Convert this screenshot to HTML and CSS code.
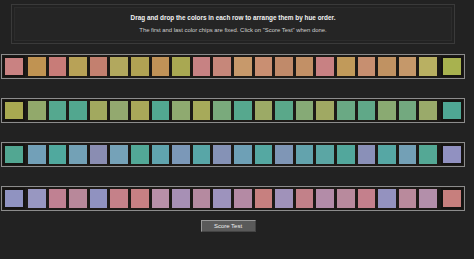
FILE: index.html
```html
<!DOCTYPE html>
<html lang="en">
<head>
  <meta charset="UTF-8">
  <title>Hue Test</title>
  <link rel="stylesheet" href="styles.css">
</head>
<body>

<div id="hueTest">
  <div class="instructions">
    <p class="lead">Drag and drop the colors in each row to arrange them by hue order.</p>
    <p class="note">The first and last color chips are fixed. Click on "Score Test" when done.</p>
  </div>

  <div id="rows"></div>

  <div class="actions">
    <button id="scoreBtn">Score Test</button>
  </div>
</div>

<script>
  const rows = [
    ["#c98282", "#c09352", "#c87c78", "#b8a257", "#c3806f", "#b2a85e", "#b0a253", "#c09257", "#a9a852", "#c78283",
     "#c6877a", "#c7996b", "#c98f72", "#c08a6a", "#c29066", "#c88183", "#c19a5a", "#c78f70", "#c09262", "#c5986a",
     "#b9b062", "#a8b24f"],
    ["#a9a951", "#92a96b", "#55a88f", "#52a78f", "#a2a95f", "#93a96f", "#a9a859", "#52a891", "#8faa70", "#a7aa5a",
     "#7aaa7c", "#56a88e", "#9caa66", "#5aa88a", "#86aa76", "#a0a963", "#6aa984", "#60a888", "#8aaa72", "#73a97f",
     "#9aaa6a", "#4fa794"],
    ["#52a792", "#72a0b8", "#50a99e", "#73a1b6", "#8a8db2", "#75a2b8", "#52a897", "#60a4ae", "#7b98b8", "#58a6a7",
     "#8592b6", "#6ea0b6", "#55a8a2", "#7f96b6", "#63a3ad", "#5ba6a4", "#52a79c", "#8a90b8", "#56a7a4", "#73a0b6",
     "#54a895", "#9191c1"],
    ["#9093c1", "#9897c1", "#c08192", "#b8889a", "#9092c0", "#c58189", "#c78083", "#b890a8", "#a790b5", "#b58aa0",
     "#9d93bd", "#b48aa4", "#c7807f", "#a092ba", "#c28189", "#b38ca8", "#b88a9d", "#c4808c", "#9492bf", "#b98a9c",
     "#b38faa", "#c77f7d"]
  ];

  const rowsEl = document.getElementById("rows");

  rows.forEach(function (colors) {
    const row = document.createElement("div");
    row.className = "chip-row";
    colors.forEach(function (c, i) {
      const chip = document.createElement("div");
      chip.className = (i === 0 || i === colors.length - 1) ? "chip fixed" : "chip";
      chip.style.background = c;
      row.appendChild(chip);
    });
    rowsEl.appendChild(row);
  });
</script>

</body>
</html>
```

FILE: styles.css
```css
body {
  margin: 0;
  background-color: #222;
  font-family: "Liberation Sans", Arial, sans-serif;
  color: #ddd;
}
#hueTest {
  width: 466px;
  padding-top: 4px;
}
.instructions {
  margin: 0 11px;
  height: 37px;
  border: 1px solid #3a3a3a;
  background-color: #252525;
  box-shadow: inset 0 0 0 2px #222, inset 0 0 0 3px #2c2c2c;
  text-align: center;
  padding-top: 1px;
}
.instructions p {
  margin: 0;
}
.lead {
  font-size: 6.4px;
  font-weight: bold;
  color: #f2f2f2;
  margin-top: 8px !important;
}
.note {
  font-size: 5.9px;
  color: #cfcfcf;
  margin-top: 6px !important;
}
#rows {
  margin-top: 10px;
  padding-left: 1px;
}
.chip-row {
  display: flex;
  gap: 1px;
  width: 460px;
  height: 21px;
  padding: 1px;
  border: 1px solid #8c8c8c;
  margin-bottom: 19px;
  background-color: #1c1a18;
}
.chip {
  flex: 1;
  box-sizing: border-box;
  border: 1px solid #1e1a16;
}
.chip.fixed {
  flex: 0 0 22px;
  border: 2px solid #161412;
}
.chip-row .chip:first-child {
  margin-right: 1px;
}
.chip-row .chip:last-child {
  margin-left: 2px;
}
.actions {
  text-align: center;
  margin-top: -16px;
  padding-right: 10px;
}
#scoreBtn {
  font-family: "Liberation Sans", Arial, sans-serif;
  font-size: 6px;
  color: #eee;
  background-color: #5a5a5a;
  border: 1px solid #888;
  border-color: #999 #444 #444 #999;
  width: 55px;
  height: 12px;
  padding: 0;
}
```
